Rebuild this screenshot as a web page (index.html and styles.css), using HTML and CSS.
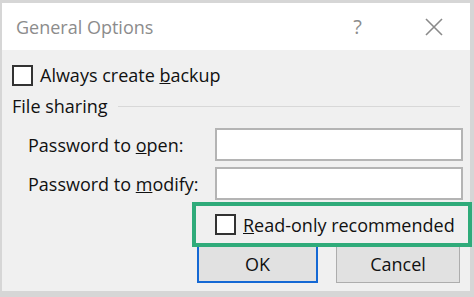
FILE: index.html
```html
<!DOCTYPE html>
<html lang="en">
<head>
  <meta charset="UTF-8" />
  <title>General Options</title>
  <link rel="stylesheet" href="styles.css">
</head>
<body>
  <div class="dialog">
    <!-- Заголовок окна -->
    <div class="titlebar">
      <span class="title">General Options</span>
      <span class="help">?</span>
      <svg class="close" width="18" height="18" viewBox="0 0 18 18">
        <path d="M1 1 L17 17 M17 1 L1 17" stroke="#8a8a8a" stroke-width="1.6" fill="none" />
      </svg>
    </div>

    <div class="content">
      <label class="check-row">
        <span class="box"></span>
        <span>Always create <u>b</u>ackup</span>
      </label>

      <div class="group-title">
        <span>File sharing</span>
        <span class="line"></span>
      </div>

      <div class="fields">
        <span class="field-label">Password to <u>o</u>pen:</span>
        <span class="input"></span>
        <span class="field-label">Password to <u>m</u>odify:</span>
        <span class="input"></span>
      </div>

      <label class="check-row highlight">
        <span class="box"></span>
        <span><u>R</u>ead-only recommended</span>
      </label>

      <div class="buttons">
        <button class="btn default">OK</button>
        <button class="btn">Cancel</button>
      </div>
    </div>
  </div>
</body>
</html>
```

FILE: styles.css
```css
* {
  box-sizing: border-box;
}

body {
  margin: 0;
  width: 474px;
  height: 297px;
  overflow: hidden;
  background: #d6d6d6;
  font-family: "Open Sans", "Noto Sans", sans-serif;
  color: #111;
}

.dialog {
  margin: 3px 0 0 2px;
  width: 468px;
  height: 288px;
  background: #f0f0f0;
}

.titlebar {
  height: 47px;
  background: #fff;
  display: flex;
  align-items: center;
  padding: 0 0 0 14px;
}

.title {
  flex: 1;
  font-size: 18px;
  color: #8c8c8c;
}

.help {
  font-size: 20px;
  color: #8c8c8c;
  margin-right: 63px;
}

.close {
  margin-right: 27px;
}

.content {
  padding: 13px 10px 0 10px;
  font-size: 18px;
}

.check-row {
  display: flex;
  align-items: center;
  gap: 7px;
  height: 24px;
}

.box {
  width: 21px;
  height: 21px;
  border: 2px solid #333;
  background: #fff;
}

.group-title {
  display: flex;
  align-items: center;
  gap: 10px;
  height: 22px;
  margin-top: 8px;
}

.group-title .line {
  flex: 1;
  height: 1px;
  background: #d8d8d8;
}

.fields {
  display: grid;
  grid-template-columns: 187px 248px;
  grid-auto-rows: 33px;
  row-gap: 6px;
  padding-left: 16px;
  margin-top: 11px;
}

.field-label {
  align-self: center;
  white-space: nowrap;
}

.input {
  background: #fff;
  border: 2px solid #b4b4b4;
}

.highlight {
  position: relative;
  z-index: 1;
  width: 280px;
  height: 45px;
  margin: 2px 0 0 180px;
  padding-left: 19px;
  border: 4px solid #2fab7a;
  background: #f0f0f0;
}

.buttons {
  display: flex;
  gap: 18px;
  margin: -3px 0 0 185px;
}

.btn {
  height: 39px;
  width: 125px;
  background: #e1e1e1;
  border: 1px solid #adadad;
  font-family: inherit;
  font-size: 18px;
  color: #111;
}

.btn.default {
  width: 122px;
  border: 2px solid #1468d4;
}
```
